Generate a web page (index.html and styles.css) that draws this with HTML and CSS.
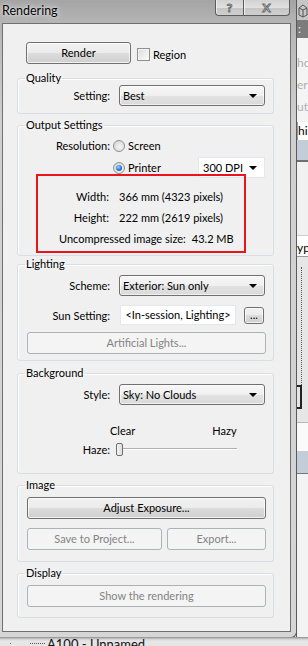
FILE: index.html
```html
<!DOCTYPE html>
<html>
<head>
<meta charset="utf-8">
<link rel="stylesheet" href="styles.css">
</head>
<body>
<div class="screen">
  <div class="upper">
    <div class="window">
      <div class="titlebar">
        <span class="title">Rendering</span>
        <div class="caption">
          <span class="cap help">?</span>
          <span class="cap close">X</span>
        </div>
      </div>
      <div class="client">
        <div class="render-row">
          <div class="btn render">Render</div>
          <div class="check"><span class="cb"></span><span>Region</span></div>
        </div>

        <fieldset class="group g-quality">
          <legend>Quality</legend>
          <div class="row r-combo"><span class="lbl">Setting:</span><div class="combo">Best</div></div>
        </fieldset>

        <fieldset class="group g-output">
          <legend>Output Settings</legend>
          <div class="row r-res"><span class="lbl">Resolution:</span><span class="radio"></span><span class="rtext">Screen</span></div>
          <div class="row r-printer"><span class="lbl"></span><span class="radio on"></span><span class="rtext">Printer</span><div class="combo dpi">300 DPI</div></div>
          <div class="info">
            <div class="irow"><span class="ilbl">Width:</span><span>366 mm (4323 pixels)</span></div>
            <div class="irow"><span class="ilbl">Height:</span><span>222 mm (2619 pixels)</span></div>
            <div class="irow size"><span>Uncompressed image size:</span><span class="sval">43.2 MB</span></div>
          </div>
        </fieldset>

        <fieldset class="group g-lighting">
          <legend>Lighting</legend>
          <div class="row r-combo"><span class="lbl">Scheme:</span><div class="combo">Exterior: Sun only</div></div>
          <div class="row r-sun"><span class="lbl">Sun Setting:</span><div class="field">&lt;In-session, Lighting&gt;</div><div class="btn dots">...</div></div>
          <div class="btn wide disabled art">Artificial Lights...</div>
        </fieldset>

        <fieldset class="group g-background">
          <legend>Background</legend>
          <div class="row r-combo"><span class="lbl">Style:</span><div class="combo">Sky: No Clouds</div></div>
          <div class="row r-ends"><span class="lbl"></span><span class="clear">Clear</span><span class="hazy">Hazy</span></div>
          <div class="row r-haze"><span class="lbl">Haze:</span><div class="slider"><span class="thumb"></span><span class="track"></span></div></div>
        </fieldset>

        <fieldset class="group g-image">
          <legend>Image</legend>
          <div class="btn wide adjust">Adjust Exposure...</div>
          <div class="pair">
            <div class="btn disabled save">Save to Project...</div>
            <div class="btn disabled export">Export...</div>
          </div>
        </fieldset>

        <fieldset class="group g-display">
          <legend>Display</legend>
          <div class="btn wide disabled show">Show the rendering</div>
        </fieldset>
      </div>
    </div>
    <div class="side">
      <div class="s s1"><svg width="10" height="14" viewBox="0 0 10 14"><path d="M1 4 L5 1 L9 4 L9 11 L5 13 L1 11 Z M1 4 L5 6 L9 4 M5 6 L5 13" fill="none" stroke="#555" stroke-width="1"/></svg></div>
      <div class="s s2">:</div>
      <div class="s s3"><span>ho</span><span>er</span><span>ut</span></div>
      <div class="s s4">hi</div>
      <div class="s s5"></div>
      <div class="s s6"></div>
      <div class="s s7">ype</div>
      <div class="s s8"><span class="dot1"></span><span class="brk"></span></div>
      <div class="s s9"></div>
      <div class="s s10"></div>
      <div class="s s11"></div>
    </div>
  </div>
  <div class="bottom">
    <span class="bdot"></span><span class="bline"></span><span class="btext">A100 - Unnamed</span>
  </div>
</div>
</body>
</html>
```

FILE: styles.css
```css
html, body {
  margin: 0;
  padding: 0;
}
body {
  font-family: Lato, "Liberation Sans", sans-serif;
  font-size: 11px;
  color: #000;
}
.screen {
  width: 308px;
  height: 646px;
  overflow: hidden;
  display: flex;
  flex-direction: column;
  background: #e2e2e2;
}
.upper {
  display: flex;
  height: 637px;
  flex: none;
}
.window {
  width: 296px;
  flex: none;
  display: flex;
  flex-direction: column;
  background: linear-gradient(to bottom, #a4a4a4 0, #b4b4b4 22px, #cfcfcf 120px, #d6d6d6 100%);
  border-bottom-right-radius: 6px;
  box-shadow: 1px 1px 0 #6a6a6a;
}
.titlebar {
  height: 23px;
  display: flex;
  flex: none;
}
.title {
  padding-left: 2px;
  line-height: 22px;
  font-size: 12.5px;
  text-shadow: 0 0 6px rgba(255,255,255,.9), 0 0 2px rgba(255,255,255,.7);
}
.caption {
  margin-left: auto;
  margin-right: 6px;
  display: flex;
  height: 16px;
}
.cap {
  display: flex;
  align-items: center;
  justify-content: center;
  border: 1px solid #5c5c5c;
  border-top: none;
  background: linear-gradient(to bottom, #d2d2d2, #e0e0e0 50%, #c4c4c4 51%, #cfcfcf);
  color: #fff;
  font-weight: bold;
  font-size: 12px;
  line-height: 14px;
  -webkit-text-stroke: 1px #6b6b6b;
  box-shadow: inset 1px 0 rgba(255,255,255,.6);
}
.help {
  width: 27px;
  border-bottom-left-radius: 4px;
}
.close {
  width: 45px;
  border-left: none;
  border-bottom-right-radius: 4px;
}
.client {
  margin: 0 5px 0 2px;
  height: 609px;
  box-sizing: border-box;
  border: 1px solid #707070;
  background: #f0f0f0;
  padding: 0 16px 0 14px;
  display: flex;
  flex-direction: column;
}

/* buttons */
.btn {
  box-sizing: border-box;
  height: 22px;
  border: 1px solid #707070;
  border-radius: 3px;
  background: linear-gradient(to bottom, #f2f2f2 0, #ebebeb 50%, #dddddd 50%, #cfcfcf 100%);
  box-shadow: inset 0 0 0 1px rgba(255,255,255,.7);
  display: flex;
  align-items: center;
  justify-content: center;
  line-height: 16px;
  flex: none;
  white-space: nowrap;
}
.btn.disabled {
  border-color: #adb2b5;
  background: #f4f4f4;
  color: #838383;
  box-shadow: none;
}
.render-row {
  display: flex;
  align-items: center;
  margin-top: 18px;
  height: 22px;
  flex: none;
}
.render {
  width: 105px;
  margin-left: 9px;
}
.check {
  display: flex;
  align-items: center;
  margin-left: 6px;
  margin-top: 3px;
}
.cb {
  width: 13px;
  height: 13px;
  box-sizing: border-box;
  border: 1px solid #8e8f8f;
  background: linear-gradient(135deg, #dcdcdc, #fbfbfb);
  box-shadow: inset 0 0 0 1px #f4f4f4;
  margin-right: 3px;
}

/* groups */
.group {
  margin: 0;
  padding: 0 8px 7px 0;
  border: 1px solid #d5dfe5;
  border-radius: 3px;
  box-shadow: inset 1px 1px 0 #fff;
  min-width: 0;
  flex: none;
}
legend {
  margin-left: 7px;
  padding: 0 1px;
  line-height: 14px;
}
.g-quality { margin-top: 7px; padding-bottom: 7px; }
.g-output { margin-top: 4px; padding-bottom: 2px; }
.g-lighting { margin-top: 1px; padding-bottom: 6px; }
.g-background { margin-top: 5px; padding-bottom: 17px; }
.g-image { margin-top: 4px; padding-bottom: 11px; }
.g-display { margin-top: 4px; padding-bottom: 10px; }

.row {
  display: flex;
  align-items: center;
  white-space: nowrap;
}
.lbl {
  width: 92px;
  flex: none;
  text-align: right;
  margin-right: 9px;
}
.r-combo {
  height: 21px;
}
.g-lighting .r-combo,
.g-background .r-combo {
  margin-top: 4px;
}
.combo {
  box-sizing: border-box;
  width: 146px;
  height: 21px;
  border: 1px solid #707070;
  border-radius: 3px;
  background: linear-gradient(to bottom, #f7f7f7 0, #efefef 50%, #e2e2e2 51%, #dadada 100%);
  box-shadow: inset 0 0 0 1px rgba(255,255,255,.6);
  padding-left: 3px;
  line-height: 19px;
  position: relative;
  flex: none;
}
.combo::after {
  content: "";
  position: absolute;
  right: 7px;
  top: 8px;
  border-left: 4px solid transparent;
  border-right: 4px solid transparent;
  border-top: 4px solid #000;
}
.combo.dpi {
  width: 67px;
  margin-left: auto;
  background: #fff;
  border-color: #e3e6ea;
  box-shadow: none;
  border-radius: 1px;
  padding-left: 4px;
}
.r-res {
  height: 21px;
  margin-top: 3px;
}
.r-printer {
  height: 21px;
  margin-top: 1px;
}
.r-res .lbl, .r-printer .lbl {
  margin-right: 3px;
}
.radio {
  width: 12px;
  height: 12px;
  box-sizing: border-box;
  border-radius: 50%;
  border: 1px solid #8e8f8f;
  background: radial-gradient(circle at 60% 60%, #f4f4f4 0, #dcdcdc 70%);
  flex: none;
  position: relative;
}
.radio.on::after {
  content: "";
  position: absolute;
  left: 2px;
  top: 2px;
  width: 6px;
  height: 6px;
  border-radius: 50%;
  background: radial-gradient(circle at 40% 35%, #9fd7ff 0, #2f7fd6 50%, #14408f 100%);
}
.rtext {
  margin-left: 3px;
}

/* red annotation box */
.info {
  margin: -4px 0 0 18px;
  width: 210px;
  box-sizing: border-box;
  border: 2px solid #e8151d;
  padding: 10px 0 2px 0;
  position: relative;
}
.irow {
  height: 21px;
  display: flex;
  align-items: center;
  white-space: nowrap;
}
.ilbl {
  width: 71px;
  text-align: right;
  margin-right: 10px;
}
.irow.size {
  padding-left: 21px;
}
.sval {
  margin-left: 6px;
}

/* lighting */
.r-sun {
  height: 20px;
  margin-top: 9px;
}
.r-sun .lbl {
  margin-right: 10px;
}
.field {
  width: 116px;
  height: 20px;
  box-sizing: border-box;
  background: #fff;
  border: 1px solid #e3e6ea;
  line-height: 18px;
  text-align: center;
  flex: none;
  white-space: nowrap;
}
.btn.dots {
  width: 20px;
  height: 17px;
  margin-left: 8px;
  line-height: 10px;
  align-items: flex-end;
  padding-bottom: 3px;
}
.btn.wide {
  margin-left: 9px;
  margin-right: -1px;
}
.art {
  margin-top: 7px;
}

/* background */
.r-ends {
  height: 14px;
  margin-top: 18px;
}
.clear {
  margin-left: -9px;
}
.hazy {
  margin-left: 77px;
}
.r-haze {
  height: 14px;
  margin-top: 5px;
}
.r-haze .lbl {
  margin-right: 6px;
}
.slider {
  display: flex;
  align-items: center;
  width: 121px;
}
.thumb {
  width: 7px;
  height: 13px;
  box-sizing: border-box;
  border: 1px solid #707070;
  border-radius: 2px;
  background: linear-gradient(to right, #f4f4f4, #dcdcdc);
  flex: none;
}
.track {
  flex: 1;
  height: 2px;
  box-sizing: border-box;
  border-top: 1px solid #b0b0b0;
  border-bottom: 1px solid #fff;
}

/* image */
.adjust {
  margin-top: 5px;
}
.pair {
  display: flex;
  margin: 9px -1px 0 9px;
  gap: 5px;
}
.save {
  width: 135px;
}
.export {
  flex: 1;
}
.show {
  margin-top: 5px;
}

/* side (background app) */
.side {
  flex: 1;
  display: flex;
  flex-direction: column;
  background: #f3f3f3;
  border-left: 1px solid #5a5a5a;
  overflow: hidden;
  font-size: 12px;
}
.s { flex: none; overflow: hidden; white-space: nowrap; }
.s1 { height: 20px; background: #c6c6c6; padding: 4px 0 0 1px; box-sizing: border-box; }
.s2 { height: 18px; background: #7c7c7c; color: #eee; line-height: 18px; padding-left: 1px; }
.s3 { height: 84px; background: #f4f4f4; color: #b0b0b0; display: flex; flex-direction: column; padding-top: 14px; box-sizing: border-box; line-height: 22px; }
.s4 { height: 18px; background: #fff; line-height: 18px; border-left: 1px solid #999; }
.s5 { height: 20px; background: #c3cdd8; border-bottom: 2px solid #6e6e6e; }
.s6 { height: 73px; background: #f1f1f1; border-bottom: 1px solid #cfcfcf; }
.s7 { height: 20px; background: #fff; line-height: 24px; border-bottom: 1px solid #999; }
.s8 { height: 165px; background: #e6e6e6; position: relative; border-bottom: 1px solid #b9b9b9; }
.dot1 { position: absolute; left: 0; top: 10px; width: 4px; height: 140px; border-right: 1px dotted #555; }
.brk { position: absolute; left: 0; top: 128px; width: 3px; height: 20px; border: 2px solid #222; border-left: none; }
.s9 { height: 28px; background: #fafafa; }
.s10 { height: 22px; background: #c3cdd8; border-bottom: 1px solid #777; }
.s11 { flex: 1; background: #f3f3f3; }

/* bottom strip */
.bottom {
  flex: 1;
  position: relative;
  background: linear-gradient(to bottom, #8a8a8a 0, #cfcfcf 2px, #e6e6e6 4px);
  display: flex;
  align-items: flex-start;
  overflow: hidden;
}
.bdot {
  width: 1px;
  height: 1px;
  background: #666;
  margin: 6px 0 0 10px;
}
.bline {
  width: 15px;
  border-top: 1px dotted #555;
  margin: 6px 0 0 19px;
}
.btext {
  margin: 0 0 0 2px;
  line-height: 18px;
  font-size: 13px;
  color: #111;
  position: relative;
  top: -2px;
}
```
